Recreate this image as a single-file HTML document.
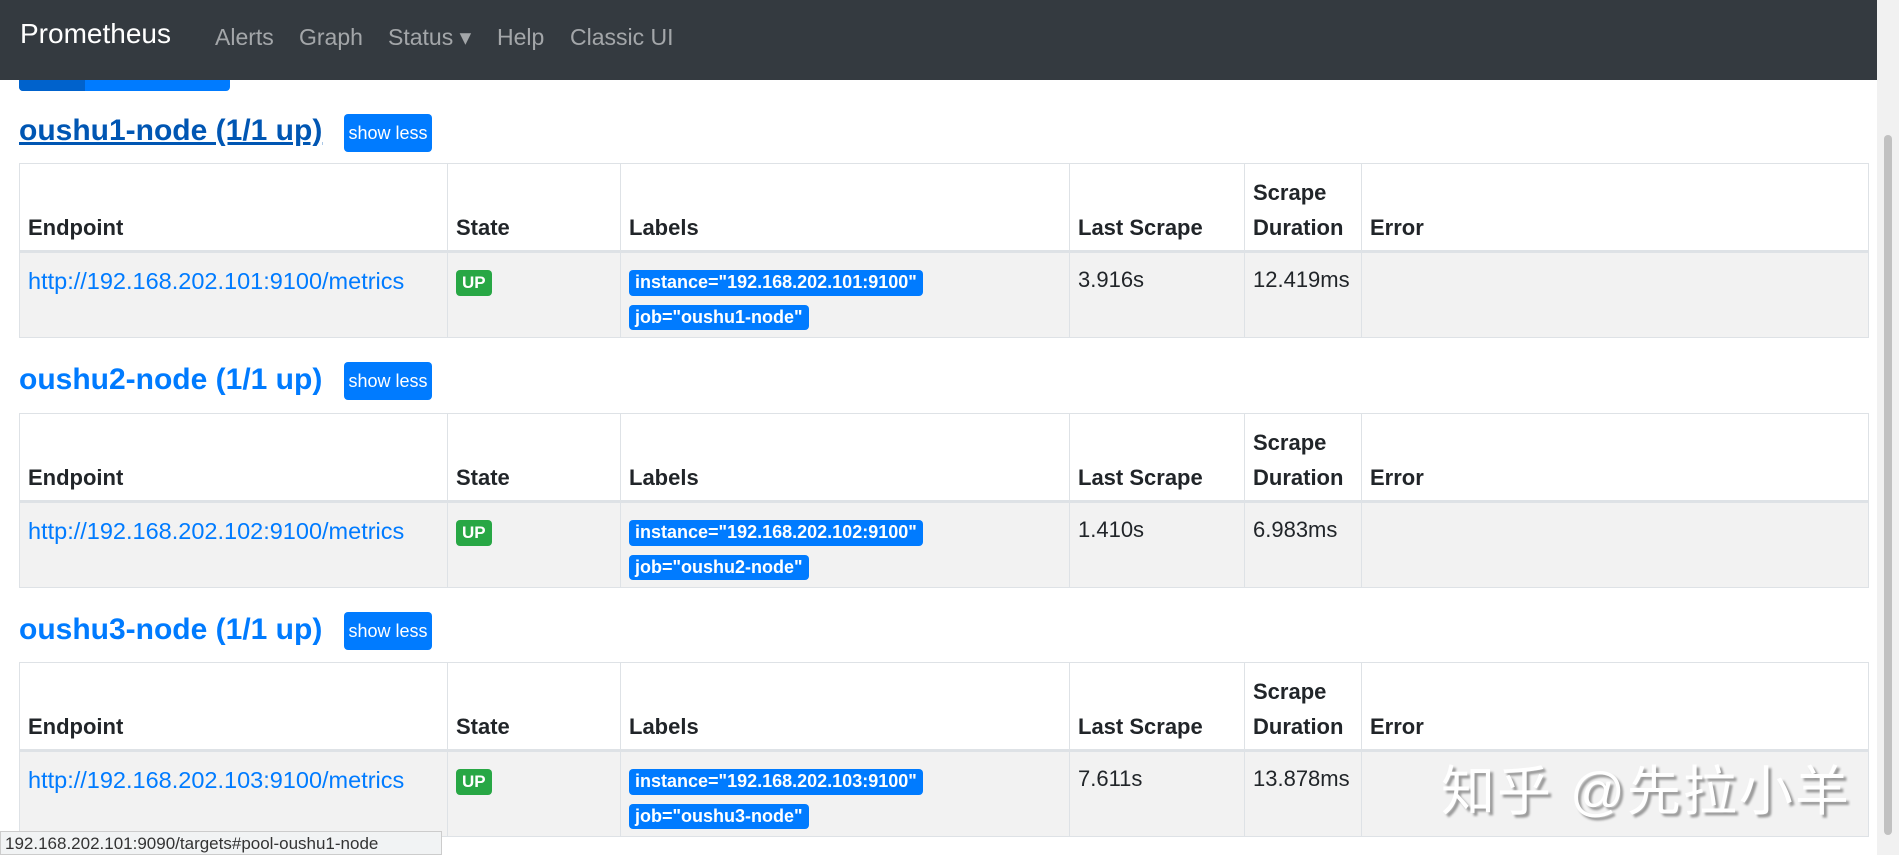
<!DOCTYPE html>
<html><head><meta charset="utf-8"><style>
*{box-sizing:border-box;margin:0;padding:0}
body{width:1899px;height:855px;overflow:hidden;background:#fff;font-family:"Liberation Sans","Noto Sans CJK SC",sans-serif;color:#212529;position:relative}
.nav{position:absolute;left:0;top:0;width:1877px;height:80px;background:#343a40}
.nav span{position:absolute;top:24px;font-size:23px;color:rgba(255,255,255,.55)}
.nav .brand{top:18px;font-size:28px;color:#fff;left:20px}
.btnrem{position:absolute;left:19px;top:80px;width:211px;height:11px;background:#007bff;border-radius:0 0 4px 4px}
.btnrem:before{content:"";position:absolute;left:0;top:0;width:66px;height:11px;background:#0062cc;border-radius:0 0 0 4px}
h2{position:absolute;left:19px;font-size:30px;font-weight:bold;color:#007bff}
h2.u{color:#0056b3;text-decoration:underline}
.sl{position:absolute;left:344px;width:88px;height:38px;background:#007bff;color:#fff;border-radius:4px;font-size:18px;line-height:38px;text-align:center}
table{position:absolute;left:19px;width:1850px;border-collapse:collapse;font-size:22px}
td,th{border:1px solid #dee2e6;vertical-align:top;text-align:left;padding:0 8px}
th{height:88px;vertical-align:bottom;padding-bottom:5px;font-weight:bold;line-height:35px;border-bottom:3px solid #dee2e6}
td{height:86px;background:#f2f2f2;padding-top:14px;line-height:1.2}
td a{color:#007bff;text-decoration:none;font-size:23.5px}
.up{display:inline-block;background:#28a745;color:#fff;font-weight:bold;font-size:17px;padding:3px 6px;border-radius:4px;margin-top:3px;line-height:1.2}
.lb{display:inline-block;background:#007bff;color:#fff;font-weight:bold;font-size:18px;padding:2px 6px;border-radius:4px;margin:3px 0 6px 0;white-space:nowrap;line-height:1.2}
.c1{width:428px}.c2{width:173px}.c3{width:449px}.c4{width:175px}.c5{width:117px}
.sb{position:absolute;right:0;top:0;width:22px;height:855px;background:#f1f1f1}
.sb:after{content:"";position:absolute;left:7px;top:135px;width:8px;height:700px;background:#c1c1c1;border-radius:4px}
.status{position:absolute;left:0;top:831px;width:442px;height:24px;background:#f1f3f4;border:1px solid #ccc;font-size:17px;color:#333;padding-left:4px;line-height:24px}
.wm{position:absolute;left:1441px;top:747px;font-size:54px;color:#fff;text-shadow:3px 3px 2px #999;letter-spacing:2px}
</style></head><body>
<div class="nav"><span class="brand">Prometheus</span><span style="left:215px">Alerts</span><span style="left:299px">Graph</span><span style="left:388px">Status ▾</span><span style="left:497px">Help</span><span style="left:570px">Classic UI</span></div>
<div class="btnrem"></div>
<div class="sb"></div>

<h2 class="u" style="top:114px">oushu1-node (1/1 up)</h2><div class="sl" style="top:114px">show less</div>
<table style="top:163px"><tr><th class="c1">Endpoint</th><th class="c2">State</th><th class="c3">Labels</th><th class="c4">Last Scrape</th><th class="c5">Scrape Duration</th><th>Error</th></tr>
<tr><td><a>http://192.168.202.101:9100/metrics</a></td><td><span class="up">UP</span></td><td><span class="lb">instance="192.168.202.101:9100"</span><br><span class="lb">job="oushu1-node"</span></td><td>3.916s</td><td>12.419ms</td><td></td></tr></table>

<h2 style="top:363px">oushu2-node (1/1 up)</h2><div class="sl" style="top:362px">show less</div>
<table style="top:413px"><tr><th class="c1">Endpoint</th><th class="c2">State</th><th class="c3">Labels</th><th class="c4">Last Scrape</th><th class="c5">Scrape Duration</th><th>Error</th></tr>
<tr><td><a>http://192.168.202.102:9100/metrics</a></td><td><span class="up">UP</span></td><td><span class="lb">instance="192.168.202.102:9100"</span><br><span class="lb">job="oushu2-node"</span></td><td>1.410s</td><td>6.983ms</td><td></td></tr></table>

<h2 style="top:613px">oushu3-node (1/1 up)</h2><div class="sl" style="top:612px">show less</div>
<table style="top:662px"><tr><th class="c1">Endpoint</th><th class="c2">State</th><th class="c3">Labels</th><th class="c4">Last Scrape</th><th class="c5">Scrape Duration</th><th>Error</th></tr>
<tr><td><a>http://192.168.202.103:9100/metrics</a></td><td><span class="up">UP</span></td><td><span class="lb">instance="192.168.202.103:9100"</span><br><span class="lb">job="oushu3-node"</span></td><td>7.611s</td><td>13.878ms</td><td></td></tr></table>

<div class="wm">知乎 @先拉小羊</div>
<div class="status">192.168.202.101:9090/targets#pool-oushu1-node</div>
</body></html>
